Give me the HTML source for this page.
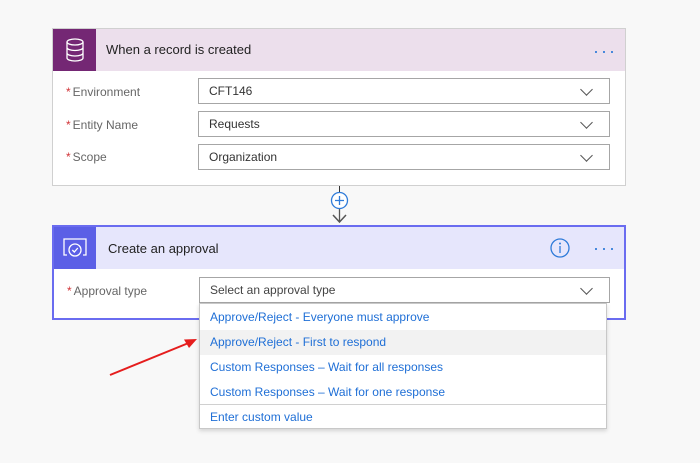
<!DOCTYPE html>
<html><head><style>
body{margin:0;width:700px;height:463px;background:#f8f8f8;font-family:"Liberation Sans",sans-serif;position:relative;overflow:hidden}
.a{position:absolute}
.card{position:absolute;background:#fff;box-sizing:border-box}
.lbl{position:absolute;font-size:12px;color:#666}
.lbl b{color:#d13438;font-weight:normal;margin-right:2px}
.box{position:absolute;background:#fff;border:1px solid #a6a6a6;box-sizing:border-box;font-size:12px;color:#333;padding-left:10px;line-height:24px}
.chev{position:absolute;right:18px;top:6px;width:8px;height:8px;border-right:1.5px solid #555;border-bottom:1.5px solid #555;transform:rotate(45deg);}
.dots{position:absolute;color:#2f7bd9;font-size:18px;letter-spacing:2px;line-height:10px}
.it{position:absolute;left:0;width:100%;height:25px;line-height:25px;padding-left:10px;box-sizing:border-box;font-size:12px;color:#1f6fd6}
</style></head><body>
<div class="card" style="left:52px;top:28px;width:574px;height:158px;border:1px solid #d0d0d0">
 <div class="a" style="left:0;top:0;width:572px;height:42px;background:#ecdfec"></div>
 <div class="a" style="left:0;top:0;width:43px;height:42px;background:#742774"></div>
 <svg class="a" style="left:11px;top:9px" width="22" height="24" viewBox="0 0 22 24" fill="none" stroke="#fff" stroke-width="1.3"><ellipse cx="11" cy="4" rx="8" ry="3"/><path d="M3 4v16c0 1.7 3.6 3 8 3s8-1.3 8-3V4M3 9.5c0 1.7 3.6 3 8 3s8-1.3 8-3M3 15c0 1.7 3.6 3 8 3s8-1.3 8-3"/></svg>
 <div class="a" style="left:53px;top:13px;font-size:13px;color:#222">When a record is created</div>
 <div class="dots" style="left:540px;top:17px">···</div>
 <div class="lbl" style="left:13px;top:56px"><b>*</b>Environment</div>
 <div class="box" style="left:145px;top:49px;width:412px;height:26px">CFT146<div class="chev"></div></div>
 <div class="lbl" style="left:13px;top:89px"><b>*</b>Entity Name</div>
 <div class="box" style="left:145px;top:82px;width:412px;height:26px">Requests<div class="chev"></div></div>
 <div class="lbl" style="left:13px;top:121px"><b>*</b>Scope</div>
 <div class="box" style="left:145px;top:115px;width:412px;height:26px">Organization<div class="chev"></div></div>
</div>
<div class="a" style="left:339px;top:186px;width:1px;height:7px;background:#333"></div>
<svg class="a" style="left:329px;top:191px" width="21" height="33" viewBox="0 0 21 33"><line x1="10.5" y1="17" x2="10.5" y2="31" stroke="#555" stroke-width="1.3"/><path d="M4 24l6.5 7 6.5-7" fill="none" stroke="#555" stroke-width="1.5"/><circle cx="10.5" cy="9.5" r="8" fill="#fff" stroke="#2f7bd9" stroke-width="1.3"/><path d="M10.5 5v9M6 9.5h9" stroke="#2f7bd9" stroke-width="1.3"/></svg>
<div class="card" style="left:52px;top:225px;width:574px;height:95px;border:2px solid #6a6cf0">
 <div class="a" style="left:0;top:0;width:570px;height:42px;background:#e6e6fc"></div>
 <div class="a" style="left:0;top:0;width:42px;height:42px;background:#5b5fe6"></div>
 <svg class="a" style="left:8px;top:10px" width="26" height="22" viewBox="0 0 26 22" fill="none" stroke="#fff" stroke-width="1.3"><path d="M5 18H2V2h22v16h-3"/><circle cx="13" cy="13" r="6"/><path d="M10.3 13l2 2 3.5-4"/></svg>
 <div class="a" style="left:54px;top:14px;font-size:13px;color:#222">Create an approval</div>
 <svg class="a" style="left:496px;top:11px" width="20" height="20"><circle cx="10" cy="10" r="9" fill="none" stroke="#2f7bd9" stroke-width="1.3"/><circle cx="10" cy="5.5" r="1" fill="#2f7bd9"/><line x1="10" y1="8" x2="10" y2="15" stroke="#2f7bd9" stroke-width="1.3"/></svg>
 <div class="dots" style="left:539px;top:16px">···</div>
 <div class="lbl" style="left:13px;top:57px"><b>*</b>Approval type</div>
 <div class="box" style="left:145px;top:50px;width:411px;height:26px;color:#444">Select an approval type<div class="chev"></div></div>
</div>
<div class="a" style="left:199px;top:303px;width:408px;height:126px;background:#fff;border:1px solid #c8c8c8;box-sizing:border-box;box-shadow:0 2px 4px rgba(0,0,0,.15)">
 <div class="it" style="top:1px">Approve/Reject - Everyone must approve</div>
 <div class="it" style="top:26px;background:#f2f2f2">Approve/Reject - First to respond</div>
 <div class="it" style="top:51px">Custom Responses – Wait for all responses</div>
 <div class="it" style="top:76px">Custom Responses – Wait for one response</div>
 <div class="a" style="left:0;top:100px;width:100%;height:1px;background:#d0d0d0"></div>
 <div class="it" style="top:101px">Enter custom value</div>
</div>
<svg class="a" style="left:105px;top:333px" width="95" height="48"><line x1="5" y1="42" x2="86" y2="9" stroke="#e51d1d" stroke-width="2"/><path d="M92 6L79 6.5 84 15z" fill="#e51d1d"/></svg>
</body></html>
